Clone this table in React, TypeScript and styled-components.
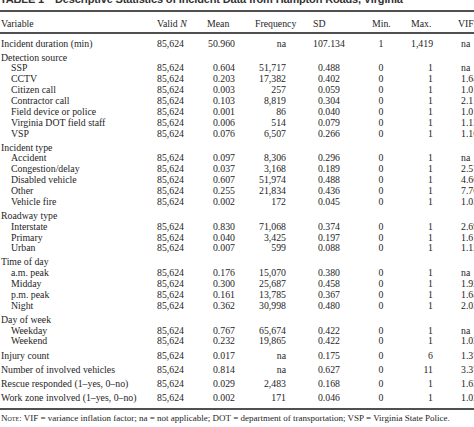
import React from "react";
import styled, { createGlobalStyle } from "styled-components";

const GlobalStyle = createGlobalStyle`
	html, body {
		margin: 0;
		padding: 0;
		background: #ffffff;
		overflow: hidden;
	}
`;

// column tracks: left edge of header, and where the numbers end
const columns = [
	{ key: "validN", width: 50, pr: 23, align: "right" },
	{ key: "mean", width: 48, pr: 20, align: "right" },
	{ key: "freq", width: 58, pr: 27, align: "right" },
	{ key: "sd", width: 59, pr: 32, align: "right" },
	{ key: "min", width: 39, pr: 21, align: "center" },
	{ key: "max", width: 47, pr: 25, align: "right" },
	{ key: "vif", width: 42, pr: 0, align: "left" },
];

const headers = ["Valid", "Mean", "Frequency", "SD", "Min.", "Max.", "VIF"];

interface RowData {
	label: string;
	sub?: boolean;
	group?: boolean;
	values?: string[];
}

const N = "85,624";

const rows: RowData[] = [
	{ label: "Incident duration (min)", values: [N, "50.960", "na", "107.134", "1", "1,419", "na"] },
	{ label: "Detection source", group: true },
	{ label: "SSP", sub: true, values: [N, "0.604", "51,717", "0.488", "0", "1", "na"] },
	{ label: "CCTV", sub: true, values: [N, "0.203", "17,382", "0.402", "0", "1", "1.643"] },
	{ label: "Citizen call", sub: true, values: [N, "0.003", "257", "0.059", "0", "1", "1.01"] },
	{ label: "Contractor call", sub: true, values: [N, "0.103", "8,819", "0.304", "0", "1", "2.11"] },
	{ label: "Field device or police", sub: true, values: [N, "0.001", "86", "0.040", "0", "1", "1.01"] },
	{ label: "Virginia DOT field staff", sub: true, values: [N, "0.006", "514", "0.079", "0", "1", "1.134"] },
	{ label: "VSP", sub: true, values: [N, "0.076", "6,507", "0.266", "0", "1", "1.166"] },
	{ label: "Incident type", group: true },
	{ label: "Accident", sub: true, values: [N, "0.097", "8,306", "0.296", "0", "1", "na"] },
	{ label: "Congestion/delay", sub: true, values: [N, "0.037", "3,168", "0.189", "0", "1", "2.577"] },
	{ label: "Disabled vehicle", sub: true, values: [N, "0.607", "51,974", "0.488", "0", "1", "4.666"] },
	{ label: "Other", sub: true, values: [N, "0.255", "21,834", "0.436", "0", "1", "7.766"] },
	{ label: "Vehicle fire", sub: true, values: [N, "0.002", "172", "0.045", "0", "1", "1.034"] },
	{ label: "Roadway type", group: true },
	{ label: "Interstate", sub: true, values: [N, "0.830", "71,068", "0.374", "0", "1", "2.696"] },
	{ label: "Primary", sub: true, values: [N, "0.040", "3,425", "0.197", "0", "1", "1.61"] },
	{ label: "Urban", sub: true, values: [N, "0.007", "599", "0.088", "0", "1", "1.125"] },
	{ label: "Time of day", group: true },
	{ label: "a.m. peak", sub: true, values: [N, "0.176", "15,070", "0.380", "0", "1", "na"] },
	{ label: "Midday", sub: true, values: [N, "0.300", "25,687", "0.458", "0", "1", "1.925"] },
	{ label: "p.m. peak", sub: true, values: [N, "0.161", "13,785", "0.367", "0", "1", "1.644"] },
	{ label: "Night", sub: true, values: [N, "0.362", "30,998", "0.480", "0", "1", "2.034"] },
	{ label: "Day of week", group: true },
	{ label: "Weekday", sub: true, values: [N, "0.767", "65,674", "0.422", "0", "1", "na"] },
	{ label: "Weekend", sub: true, values: [N, "0.232", "19,865", "0.422", "0", "1", "1.025"] },
	{ label: "Injury count", group: true, values: [N, "0.017", "na", "0.175", "0", "6", "1.377"] },
	{ label: "Number of involved vehicles", group: true, values: [N, "0.814", "na", "0.627", "0", "11", "3.377"] },
	{ label: "Rescue responded (1–yes, 0–no)", group: true, values: [N, "0.029", "2,483", "0.168", "0", "1", "1.634"] },
	{ label: "Work zone involved (1–yes, 0–no)", group: true, values: [N, "0.002", "171", "0.046", "0", "1", "1.025"] },
];

const App = () => {
	return (
		<Page>
			<GlobalStyle />
			<Title>
				<span>TABLE 1</span>
				<span>Descriptive Statistics of Incident Data from Hampton Roads, Virginia</span>
			</Title>
			<Rule />
			<HeadRow>
				<LabelCell>Variable</LabelCell>
				{headers.map((h, i) => (
					<HeadCell key={h}>
						{i === 0 ? (
							<>
								Valid <i>N</i>
							</>
						) : (
							h
						)}
					</HeadCell>
				))}
			</HeadRow>
			<Rule />
			<Body>
				{rows.map((r) => (
					<Row key={r.label} $group={!!r.group}>
						<LabelCell $sub={!!r.sub}>{r.label}</LabelCell>
						{r.values &&
							r.values.map((v, i) => (
								<Cell key={i} $pr={columns[i].pr} $align={columns[i].align}>
									{v}
								</Cell>
							))}
					</Row>
				))}
			</Body>
			<Rule />
			<Note>
				<SmallCaps>Note</SmallCaps>: VIF = variance inflation factor; na = not applicable; DOT = department of
				transportation; VSP = Virginia State Police.
			</Note>
		</Page>
	);
};

export default App;

const Page = styled.div`
	width: 474px;
	height: 427px;
	overflow: hidden;
	font-family: "Liberation Serif", "Times New Roman", serif;
	font-size: 9.8px;
	color: #252525;
`;

const Title = styled.div`
	display: flex;
	gap: 11px;
	margin-top: -8px;
	height: 18px;
	font-family: "Liberation Sans", Arial, sans-serif;
	font-weight: bold;
	font-size: 11px;
	line-height: 14px;
	letter-spacing: -0.15px;
	color: #333333;
	white-space: nowrap;
`;

const Rule = styled.div`
	width: 520px;
	height: 2px;
	background: #505050;
`;

const tracks = `157px ${columns.map((c) => `${c.width}px`).join(" ")}`;

const HeadRow = styled.div`
	display: grid;
	grid-template-columns: ${tracks};
	width: 520px;
	padding: 6px 0 3px;
	line-height: 11px;
`;

const HeadCell = styled.div`
	white-space: nowrap;
	text-align: left;

	i {
		font-style: italic;
	}
`;

const Body = styled.div`
	padding: 4.6px 0 4.6px;
`;

const Row = styled.div<{ $group: boolean }>`
	display: grid;
	grid-template-columns: ${tracks};
	width: 520px;
	line-height: 10.85px;
	margin-top: ${(p) => (p.$group ? "3.2px" : "0")};
`;

const LabelCell = styled.div<{ $sub?: boolean }>`
	padding-left: ${(p) => (p.$sub ? "11px" : "1px")};
	white-space: nowrap;
`;

const Cell = styled.div<{ $pr: number; $align: string }>`
	white-space: nowrap;
	text-align: ${(p) => p.$align};
	padding-right: ${(p) => p.$pr}px;
	padding-left: ${(p) => (p.$align === "left" ? "3px" : "0")};
`;

const Note = styled.div`
	padding: 2.5px 0 0 1px;
	font-size: 9px;
	line-height: 11px;
	white-space: nowrap;
`;

const SmallCaps = styled.span`
	font-variant: small-caps;
`;
